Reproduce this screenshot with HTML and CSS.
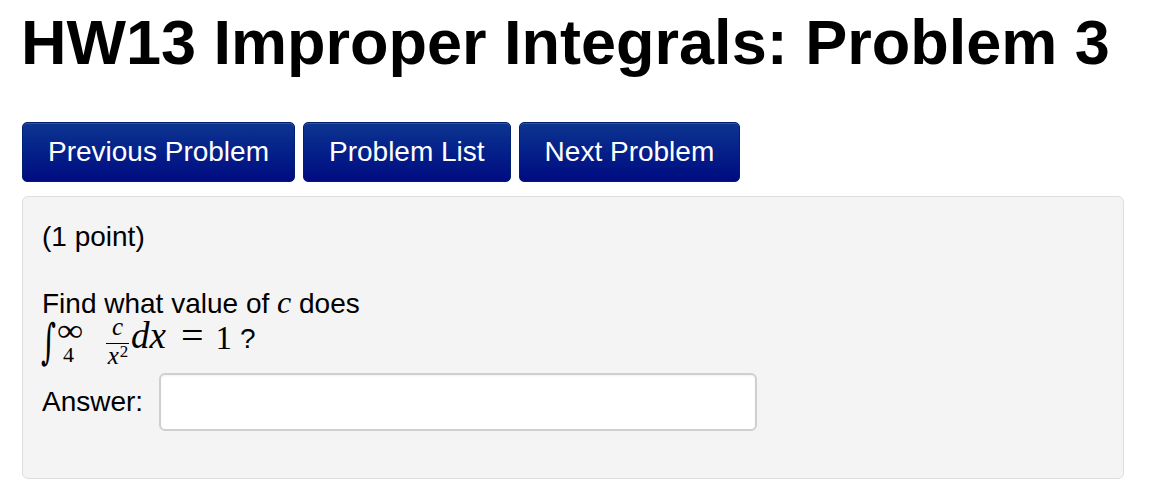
FILE: index.html
```html
<!DOCTYPE html>
<html>
<head>
<meta charset="utf-8">
<link rel="stylesheet" href="styles.css">
</head>
<body>
<h1 class="title">HW13 Improper Integrals: Problem 3</h1>
<nav class="nav">
  <a class="btn" href="#">Previous Problem</a>
  <a class="btn" href="#">Problem List</a>
  <a class="btn" href="#">Next Problem</a>
</nav>
<div class="panel">
  <p class="points">(1 point)</p>
  <div class="question">
    <div class="line">Find what value of <span class="mi">c</span> does</div>
    <div class="mathline">
      <span class="int">∫</span>
      <span class="limits"><span class="sup">∞</span><span class="sub">4</span></span>
      <span class="frac"><span class="num">c</span><span class="den"><span class="dx-x">x</span><span class="pow">2</span></span></span>
      <span class="big dx">dx</span>
      <span class="big eq">=</span>
      <span class="big one">1</span>
      <span class="qm">?</span>
    </div>
  </div>
  <div class="answer">
    <label class="label" for="ans">Answer:</label>
    <input class="input" id="ans" type="text">
  </div>
</div>
</body>
</html>
```
FILE: styles.css
```css
html, body {
  margin: 0;
  padding: 0;
  background: #ffffff;
}
body {
  font-family: "Liberation Sans", Arial, Helvetica, sans-serif;
  color: #000;
  padding: 0 26px 0 22px;
}
.title {
  font-size: 63px;
  font-weight: bold;
  line-height: 72px;
  margin: 6px 0 0 -1px;
}
.nav {
  display: flex;
  gap: 8px;
  margin-top: 44px;
}
.btn {
  display: block;
  height: 58px;
  line-height: 58px;
  padding: 0 25px;
  font-size: 28px;
  color: #fff;
  text-decoration: none;
  border: 1px solid #001f6e;
  border-radius: 5px;
  background: linear-gradient(to bottom, #0d3590 0%, #05228a 45%, #000b80 100%);
  box-shadow: inset 0 1px 0 rgba(255,255,255,0.15);
}
.panel {
  margin-top: 14px;
  height: 281px;
  border: 1px solid #dedede;
  border-radius: 6px;
  background: #f4f4f4;
  padding: 0 19px;
}
.points {
  margin: 24px 0 0;
  font-size: 28px;
  line-height: 32px;
}
.question {
  margin-top: 33px;
  font-size: 28px;
}
.line {
  line-height: 32px;
}
.mi {
  font-family: "Liberation Serif", "Times New Roman", serif;
  font-style: italic;
  font-size: 32px;
}
.mathline {
  display: flex;
  align-items: flex-start;
  height: 50px;
  font-family: "Liberation Serif", "Times New Roman", serif;
}
.int {
  display: block;
  width: 15px;
  font-family: "DejaVu Serif", serif;
  font-style: italic;
  font-size: 48px;
  line-height: 42px;
  margin-left: -1px;
  transform: scaleX(0.6);
  transform-origin: left center;
}
.limits {
  display: flex;
  flex-direction: column;
  width: 49px;
  margin-left: 1px;
}
.sup {
  font-size: 32px;
  line-height: 20px;
  transform: scaleX(1.14);
  transform-origin: left center;
}
.sub {
  font-size: 22px;
  line-height: 22px;
  margin: 4px 0 0 6px;
}
.frac {
  display: flex;
  flex-direction: column;
  align-items: center;
  width: 23px;
}
.num {
  font-style: italic;
  font-size: 25px;
  line-height: 14px;
  padding-bottom: 9px;
  width: 100%;
  text-align: center;
  border-bottom: 1.5px solid #000;
}
.den {
  font-size: 25px;
  line-height: 20px;
  white-space: nowrap;
  margin-top: 2px;
  margin-left: 1px;
}
.dx-x {
  font-style: italic;
}
.pow {
  font-size: 17px;
  position: relative;
  top: -7px;
  margin-left: 1px;
}
.big {
  font-size: 37px;
  line-height: 36px;
  margin-top: -2px;
}
.dx {
  font-style: italic;
  margin-left: 2px;
}
.eq {
  font-size: 40px;
  margin-left: 15px;
}
.one {
  font-size: 33px;
  margin-left: 12px;
  margin-top: 0;
}
.qm {
  font-family: "Liberation Sans", Arial, sans-serif;
  font-size: 28px;
  line-height: 32px;
  margin: 3px 0 0 8px;
}
.answer {
  display: flex;
  align-items: center;
  margin-top: 3px;
}
.label {
  font-size: 28px;
}
.input {
  margin-left: 16px;
  width: 598px;
  height: 58px;
  box-sizing: border-box;
  border: 2px solid #cfcfcf;
  border-radius: 6px;
  background: #fff;
  box-shadow: inset 0 1px 2px rgba(0,0,0,0.05);
}
```
